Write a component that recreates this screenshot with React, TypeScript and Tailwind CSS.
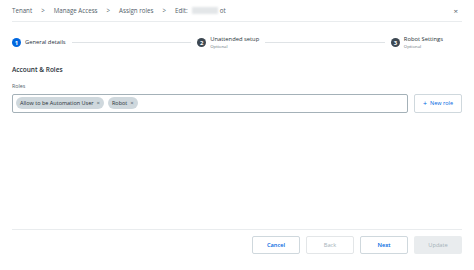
import React from "react";

const font = { fontFamily: '"Open Sans", "Noto Sans", sans-serif' };

function Step({ n, title, optional, active }: { n: number; title: string; optional?: boolean; active?: boolean }) {
  return (
    <div className="flex items-center gap-[4px] shrink-0">
      <div
        className={`w-[9px] h-[9px] rounded-full flex items-center justify-center text-white text-[6px] font-bold leading-none ${
          active ? "bg-[#0067df]" : "bg-[#3d4852]"
        }`}
      >
        {n}
      </div>
      <div className="flex flex-col leading-none">
        <span className="text-[5.8px] text-[#273139]">{title}</span>
        {optional && <span className="text-[4.3px] text-[#6b7781] mt-[1px]">Optional</span>}
      </div>
    </div>
  );
}

function Chip({ label }: { label: string }) {
  return (
    <div className="h-[12px] rounded-full bg-[#cfd8dd] px-[4px] flex items-center gap-[3px] text-[5.5px] text-[#273139]">
      <span>{label}</span>
      <span className="text-[6px] leading-none text-[#526069]">×</span>
    </div>
  );
}

export default function App() {
  return (
    <div className="w-[474px] h-[270px] bg-white flex flex-col px-[12px] text-[#273139]" style={font}>
      <div className="h-[22px] flex items-center border-b border-[#e9ecee] text-[6.2px] text-[#526069]">
        <span>Tenant</span>
        <span className="mx-[9px]">&gt;</span>
        <span>Manage Access</span>
        <span className="mx-[9px]">&gt;</span>
        <span>Assign roles</span>
        <span className="mx-[9px]">&gt;</span>
        <span>Edit:</span>
        <span className="ml-[4px] w-[26px] h-[7px] bg-[#e3e6e8] blur-[1px]" />
        <span className="ml-[2px]">ot</span>
        <span className="ml-auto mr-[4px] text-[8px] text-[#526069]">×</span>
      </div>
      <div className="h-[21px] mt-[10px] flex items-center">
        <Step n={1} title="General details" active />
        <div className="flex-1 h-px bg-[#dfe3e6] mx-[6px]" />
        <Step n={2} title="Unattended setup" optional />
        <div className="flex-1 h-px bg-[#dfe3e6] mx-[6px]" />
        <Step n={3} title="Robot Settings" optional />
        <div className="w-[19px]" />
      </div>
      <div className="mt-[12px] text-[6.5px] font-semibold text-[#273139]">Account &amp; Roles</div>
      <div className="mt-[8px] text-[5.3px] text-[#526069]">Roles</div>
      <div className="mt-[3px] flex gap-[6px]">
        <div className="flex-1 h-[19px] border border-[#a4b1b8] rounded-[2px] flex items-center gap-[4px] px-[3px]">
          <Chip label="Allow to be Automation User" />
          <Chip label="Robot" />
        </div>
        <div className="w-[48px] h-[19px] border border-[#cfd8dd] rounded-[2px] flex items-center justify-center gap-[3px] text-[5.5px] text-[#0067df]">
          <span className="text-[7px] leading-none">+</span>
          <span>New role</span>
        </div>
      </div>
      <div className="flex-1" />
      <div className="border-t border-[#e9ecee] pt-[6px] pb-[16px] flex justify-end gap-[6px]">
        <div className="w-[48px] h-[18px] border border-[#cfd8dd] rounded-[2px] flex items-center justify-center text-[5.7px] font-semibold text-[#0067df]">
          Cancel
        </div>
        <div className="w-[48px] h-[18px] border border-[#e3e6e8] rounded-[2px] flex items-center justify-center text-[5.7px] text-[#a4b1b8]">
          Back
        </div>
        <div className="w-[48px] h-[18px] border border-[#cfd8dd] rounded-[2px] flex items-center justify-center text-[5.7px] font-semibold text-[#0067df]">
          Next
        </div>
        <div className="w-[48px] h-[18px] bg-[#e9ecee] rounded-[2px] flex items-center justify-center text-[5.7px] text-[#a4b1b8]">
          Update
        </div>
      </div>
    </div>
  );
}
